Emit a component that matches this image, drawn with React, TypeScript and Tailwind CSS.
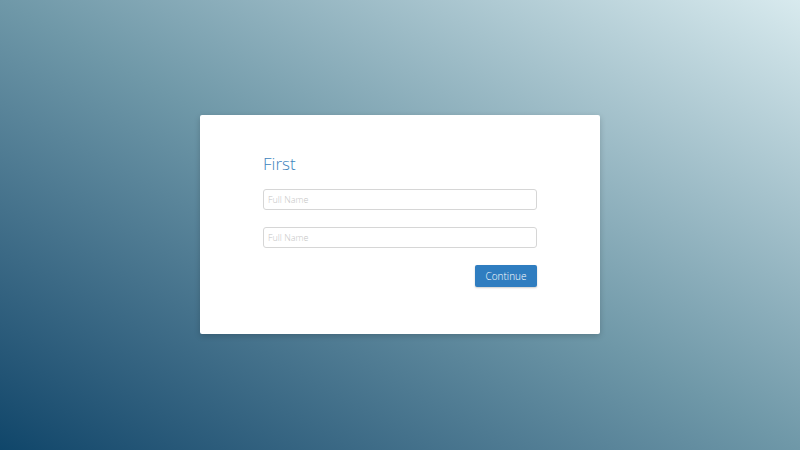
const Field = ({ placeholder }: { placeholder: string }) => (
  <input
    type="text"
    placeholder={placeholder}
    className="h-[21px] w-full rounded-[3px] border border-[#d6d6d6] bg-white px-[4px] text-[9px] font-light text-[#555] outline-none placeholder:text-[#c4c4c4]"
  />
)

const App = () => {
  return (
    <div
      className="flex h-[450px] w-[800px] items-center justify-center bg-gradient-to-tr from-[#0f466a] via-[#6f98a8] to-[#d8eaee]"
      style={{ fontFamily: '"Open Sans", "Liberation Sans", sans-serif' }}
    >
      <div className="mt-[-1px] flex h-[219px] w-[400px] flex-col rounded-[2px] bg-white px-[63px] pt-[37px] shadow-[0_2px_6px_rgba(0,0,0,0.18)]">
        <h1 className="m-0 text-[17px] leading-[24px] font-light text-[#3d84bd]">
          First
        </h1>
        <form className="mt-[13px] flex flex-col">
          <Field placeholder="Full Name" />
          <div className="h-[17px]" />
          <Field placeholder="Full Name" />
          <div className="mt-[17px] flex justify-end">
            <button
              type="button"
              className="h-[22px] w-[62px] rounded-[2px] bg-[#2f7dc0] text-[10px] font-light text-white shadow-[0_1px_2px_rgba(0,0,0,0.2)]"
            >
              Continue
            </button>
          </div>
        </form>
      </div>
    </div>
  )
}

export default App
